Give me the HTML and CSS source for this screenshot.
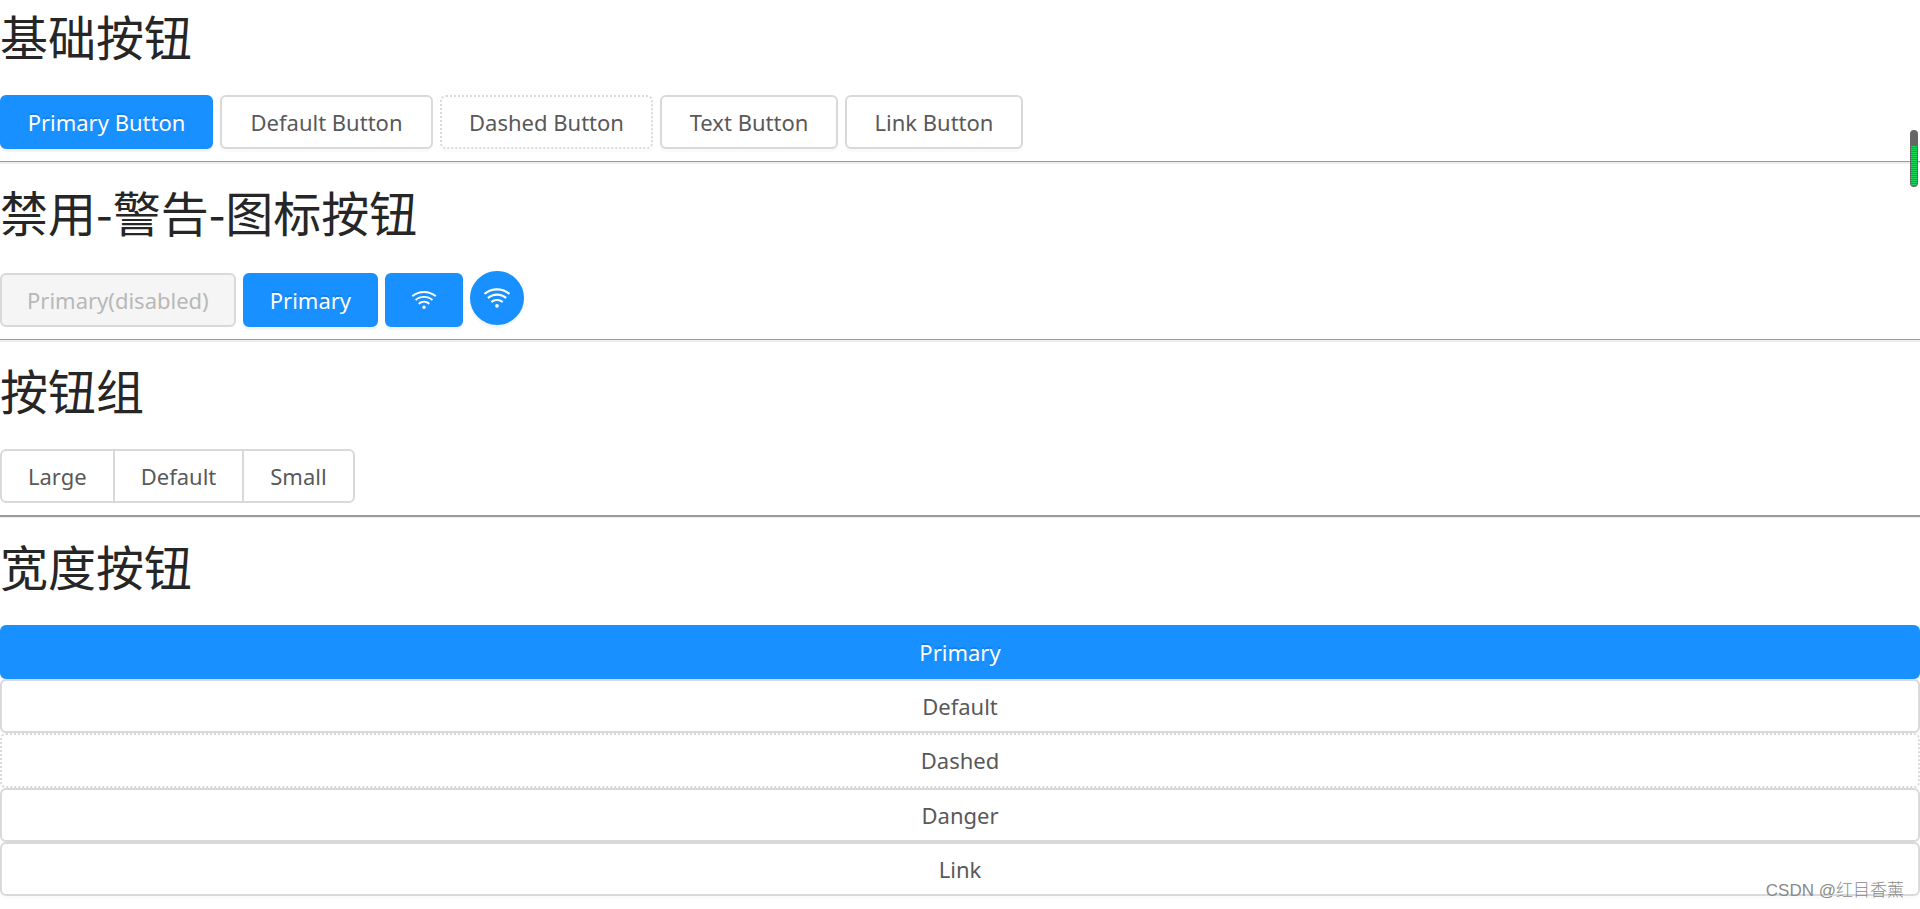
FILE: index.html
```html
<!DOCTYPE html>
<html lang="zh-CN">

<head>
    <meta charset="UTF-8">
    <meta name="viewport" content="width=device-width, initial-scale=1.0">
    <title>Button</title>
    <link rel="stylesheet" href="styles.css">
</head>

<body>
    <!-- wifi icon shared by the icon buttons -->
    <svg class="icon-defs" aria-hidden="true">
        <symbol id="icon-wifi" viewBox="0 0 1024 1024">
            <path d="M723 620.5C666.8 571.6 593.4 542 513 542s-153.8 29.6-210.1 78.6a8.1 8.1 0 00-.8 11.2l36 42.9c2.9 3.4 8 3.8 11.4.9C393.1 637.2 450.3 614 513 614s119.9 23.2 163.5 61.5c3.4 2.9 8.5 2.5 11.4-.9l36-42.9c2.8-3.3 2.4-8.3-.9-11.2zm117.4-140.1C751.7 406.5 637.6 362 513 362s-238.7 44.5-327.5 118.4a8.05 8.05 0 00-1 11.3l36 42.9c2.8 3.4 7.9 3.8 11.2 1C308 472.2 406.1 434 513 434s205 38.2 281.2 101.6c3.4 2.8 8.4 2.4 11.2-1l36-42.9c2.8-3.4 2.4-8.5-1-11.3zm116.7-139C835.7 241.8 680.3 182 511 182c-168.2 0-322.6 59-443.7 157.4a8 8 0 00-1.1 11.4l36 42.9c2.8 3.3 7.8 3.8 11.1 1.1C222 306.3 360.3 254 511 254c151.8 0 291 53.5 400 142.7 3.4 2.8 8.4 2.3 11.2-1.1l36-42.9c2.9-3.4 2.4-8.5-1.1-11.3zM448 778a64 64 0 10128 0 64 64 0 10-128 0z" />
        </symbol>
    </svg>

    <h1>基础按钮</h1>
    <div class="row">
        <button class="btn btn-primary btn-wide">Primary Button</button>
        <button class="btn btn-wide">Default Button</button>
        <button class="btn btn-dashed btn-wide">Dashed Button</button>
        <button class="btn btn-medium">Text Button</button>
        <button class="btn btn-medium">Link Button</button>
    </div>
    <hr>

    <h1>禁用-警告-图标按钮</h1>
    <div class="row">
        <button class="btn" disabled>Primary(disabled)</button>
        <button class="btn btn-primary">Primary</button>
        <button class="btn btn-primary btn-icon" aria-label="wifi">
            <svg><use href="#icon-wifi" /></svg>
        </button>
        <button class="btn btn-primary btn-circle" aria-label="wifi">
            <svg><use href="#icon-wifi" /></svg>
        </button>
    </div>
    <hr>

    <h1>按钮组</h1>
    <div class="btn-group">
        <button class="btn">Large</button>
        <button class="btn">Default</button>
        <button class="btn">Small</button>
    </div>
    <hr class="thick">

    <h1>宽度按钮</h1>
    <div class="block-list">
        <button class="btn btn-primary">Primary</button>
        <button class="btn">Default</button>
        <button class="btn btn-dashed">Dashed</button>
        <button class="btn">Danger</button>
        <button class="btn">Link</button>
    </div>

    <div class="meter"></div>
    <div class="watermark">CSDN @红目香薰</div>
</body>

</html>
```

FILE: styles.css
```css
* {
    box-sizing: border-box;
}

body {
    position: relative;
    min-height: 100vh;
    margin: 0;
    background-color: #fff;
    color: #262626;
    font-family: "Noto Sans", "Noto Sans CJK SC", sans-serif;
    font-size: 22px;
}

h1 {
    margin: 0 0 24px;
    font-family: "Noto Sans CJK SC", sans-serif;
    font-size: 48px;
    font-weight: 400;
    line-height: 71px;
}

hr {
    margin: 12px 0;
    border: solid;
    border-width: 1px 0 2px;
    border-color: #9a9a9a #eee #eee;
}

hr.thick {
    border-width: 2px 0 1px;
}

.icon-defs {
    display: none;
}

.row {
    display: flex;
    align-items: flex-end;
    gap: 7px;
}

/* Buttons */
.btn {
    min-height: 54px;
    padding: 0 25px;
    border: 2px solid #d9d9d9;
    border-radius: 6px;
    background-color: #fff;
    box-shadow: 0 3px 0 rgba(0, 0, 0, 0.02);
    color: #595959;
    font-family: inherit;
    font-size: 22px;
    line-height: 50px;
    cursor: pointer;
}

.btn:disabled {
    background-color: #f5f5f5;
    box-shadow: none;
    color: #b8b8b8;
    cursor: not-allowed;
}

.btn-primary {
    border-color: #1890ff;
    background-color: #1890ff;
    box-shadow: 0 3px 0 rgba(0, 0, 0, 0.045);
    color: #fff;
    text-shadow: 0 -2px 0 rgba(0, 0, 0, 0.12);
}

.btn-dashed {
    border-style: dotted;
}

.btn-wide {
    min-width: 213px;
}

.btn-medium {
    min-width: 178px;
}

.btn svg {
    display: block;
    width: 28px;
    height: 28px;
    fill: currentColor;
}

.btn-icon {
    padding: 0 23px;
}

.btn-circle {
    width: 54px;
    margin-bottom: 2px;
    padding: 0 10px;
    border-radius: 50%;
}

.btn-circle svg {
    width: 30px;
    height: 30px;
}

/* Joined buttons share one border */
.btn-group {
    display: flex;
}

.btn-group .btn {
    padding: 0 26px;
    border-radius: 0;
    box-shadow: none;
}

.btn-group .btn + .btn {
    margin-left: -2px;
}

.btn-group .btn:first-child {
    border-radius: 6px 0 0 6px;
}

.btn-group .btn:last-child {
    border-radius: 0 6px 6px 0;
}

/* Full width buttons */
.block-list {
    display: grid;
    grid-auto-rows: 1fr;
    min-height: 271px;
}

/* Overlays */
.meter {
    position: absolute;
    top: 130px;
    right: 2px;
    width: 8px;
    height: 57px;
    border: 1px solid #666;
    border-top-width: 16px;
    border-radius: 4px;
    background: repeating-linear-gradient(#18d657 0 1px, #5a7a62 1px 2px);
}

.watermark {
    position: absolute;
    right: 16px;
    bottom: 5px;
    color: #8a8a8a;
    font-family: "Liberation Sans", "Noto Sans CJK SC", sans-serif;
    font-size: 17px;
    font-weight: 300;
    line-height: 26px;
}
```
